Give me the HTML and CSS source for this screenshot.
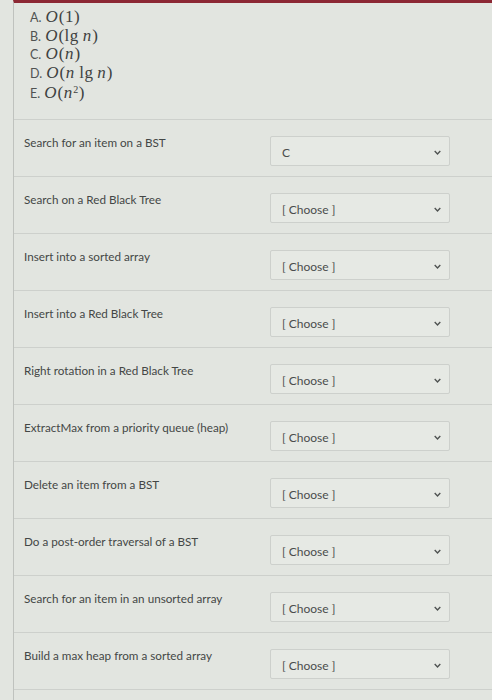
FILE: index.html
```html
<!DOCTYPE html>
<html>
<head>
<meta charset="utf-8">
<link rel="stylesheet" href="styles.css">
</head>
<body>
<div class="page">
  <ul class="answers">
    <li><span class="ltr">A.</span> <span class="m">O</span><span class="r">(1)</span></li>
    <li><span class="ltr">B.</span> <span class="m">O</span><span class="r">(lg&thinsp;</span><span class="m">n</span><span class="r">)</span></li>
    <li><span class="ltr">C.</span> <span class="m">O</span><span class="r">(</span><span class="m">n</span><span class="r">)</span></li>
    <li><span class="ltr">D.</span> <span class="m">O</span><span class="r">(</span><span class="m">n</span><span class="r">&thinsp;lg&thinsp;</span><span class="m">n</span><span class="r">)</span></li>
    <li class="sq"><span class="ltr">E.</span> <span class="m">O</span><span class="r">(</span><span class="m">n</span><sup class="r">2</sup><span class="r">)</span></li>
  </ul>
  <div class="rows">
    <div class="row"><div class="label">Search for an item on a BST</div><div class="select"><span>C</span><svg class="chev" viewBox="0 0 10 6"><path d="M1 1l4 4 4-4" /></svg></div></div>
    <div class="row"><div class="label">Search on a Red Black Tree</div><div class="select"><span>[ Choose ]</span><svg class="chev" viewBox="0 0 10 6"><path d="M1 1l4 4 4-4" /></svg></div></div>
    <div class="row"><div class="label">Insert into a sorted array</div><div class="select"><span>[ Choose ]</span><svg class="chev" viewBox="0 0 10 6"><path d="M1 1l4 4 4-4" /></svg></div></div>
    <div class="row"><div class="label">Insert into a Red Black Tree</div><div class="select"><span>[ Choose ]</span><svg class="chev" viewBox="0 0 10 6"><path d="M1 1l4 4 4-4" /></svg></div></div>
    <div class="row"><div class="label">Right rotation in a Red Black Tree</div><div class="select"><span>[ Choose ]</span><svg class="chev" viewBox="0 0 10 6"><path d="M1 1l4 4 4-4" /></svg></div></div>
    <div class="row"><div class="label">ExtractMax from a priority queue (heap)</div><div class="select"><span>[ Choose ]</span><svg class="chev" viewBox="0 0 10 6"><path d="M1 1l4 4 4-4" /></svg></div></div>
    <div class="row"><div class="label">Delete an item from a BST</div><div class="select"><span>[ Choose ]</span><svg class="chev" viewBox="0 0 10 6"><path d="M1 1l4 4 4-4" /></svg></div></div>
    <div class="row"><div class="label">Do a post-order traversal of a BST</div><div class="select"><span>[ Choose ]</span><svg class="chev" viewBox="0 0 10 6"><path d="M1 1l4 4 4-4" /></svg></div></div>
    <div class="row"><div class="label">Search for an item in an unsorted array</div><div class="select"><span>[ Choose ]</span><svg class="chev" viewBox="0 0 10 6"><path d="M1 1l4 4 4-4" /></svg></div></div>
    <div class="row last"><div class="label">Build a max heap from a sorted array</div><div class="select"><span>[ Choose ]</span><svg class="chev" viewBox="0 0 10 6"><path d="M1 1l4 4 4-4" /></svg></div></div>
  </div>
</div>
</body>
</html>
```
FILE: styles.css
```css
html, body {
  margin: 0;
  padding: 0;
  background: #e2e5e0;
  overflow: hidden;
}
body {
  width: 492px;
  height: 700px;
  font-family: Lato, "Open Sans", sans-serif;
  color: #4a4d4c;
}
.page {
  margin-left: 13px;
  border-left: 1px solid #bfc2be;
  border-top: 3px solid #8c2834;
  height: 697px;
}
.answers {
  list-style: none;
  margin: 0;
  padding: 4px 0 0 16px;
  border-bottom: 1px solid #cdd0cc;
  box-sizing: border-box;
  height: 117px;
}
.answers li {
  height: 18.5px;
  line-height: 18.5px;
  white-space: nowrap;
}
.answers li.sq {
  margin-top: 2px;
}
.ltr {
  font-family: Lato, sans-serif;
  font-size: 12.5px;
  color: #505352;
}
.m {
  font-family: "Liberation Serif", "DejaVu Serif", serif;
  font-style: italic;
  font-size: 17px;
  color: #3e4140;
  padding-right: 1px;
}
.r {
  font-family: "Liberation Serif", "DejaVu Serif", serif;
  font-size: 17px;
  color: #3e4140;
  letter-spacing: 0.5px;
}
sup.r {
  font-size: 10px;
  line-height: 10px;
  vertical-align: 5px;
}
.rows {
  display: flex;
  flex-direction: column;
}
.row {
  height: 57px;
  box-sizing: border-box;
  border-bottom: 1px solid #cdd0cc;
  display: flex;
  align-items: flex-start;
  padding: 14px 0 0 10px;
}
.label {
  width: 246px;
  font-size: 11.7px;
  line-height: 16px;
  color: #444746;
}
.select {
  margin-top: 2px;
  width: 180px;
  height: 30px;
  box-sizing: border-box;
  border: 1px solid #cdd0cc;
  border-radius: 2px;
  background: #e6e9e4;
  display: flex;
  align-items: center;
  justify-content: space-between;
  padding: 2px 8px 0 11px;
  font-size: 12px;
  color: #4a4d4c;
}
.chev {
  width: 7px;
  height: 5px;
  fill: none;
  stroke: #4f5251;
  stroke-width: 2;
}
```
